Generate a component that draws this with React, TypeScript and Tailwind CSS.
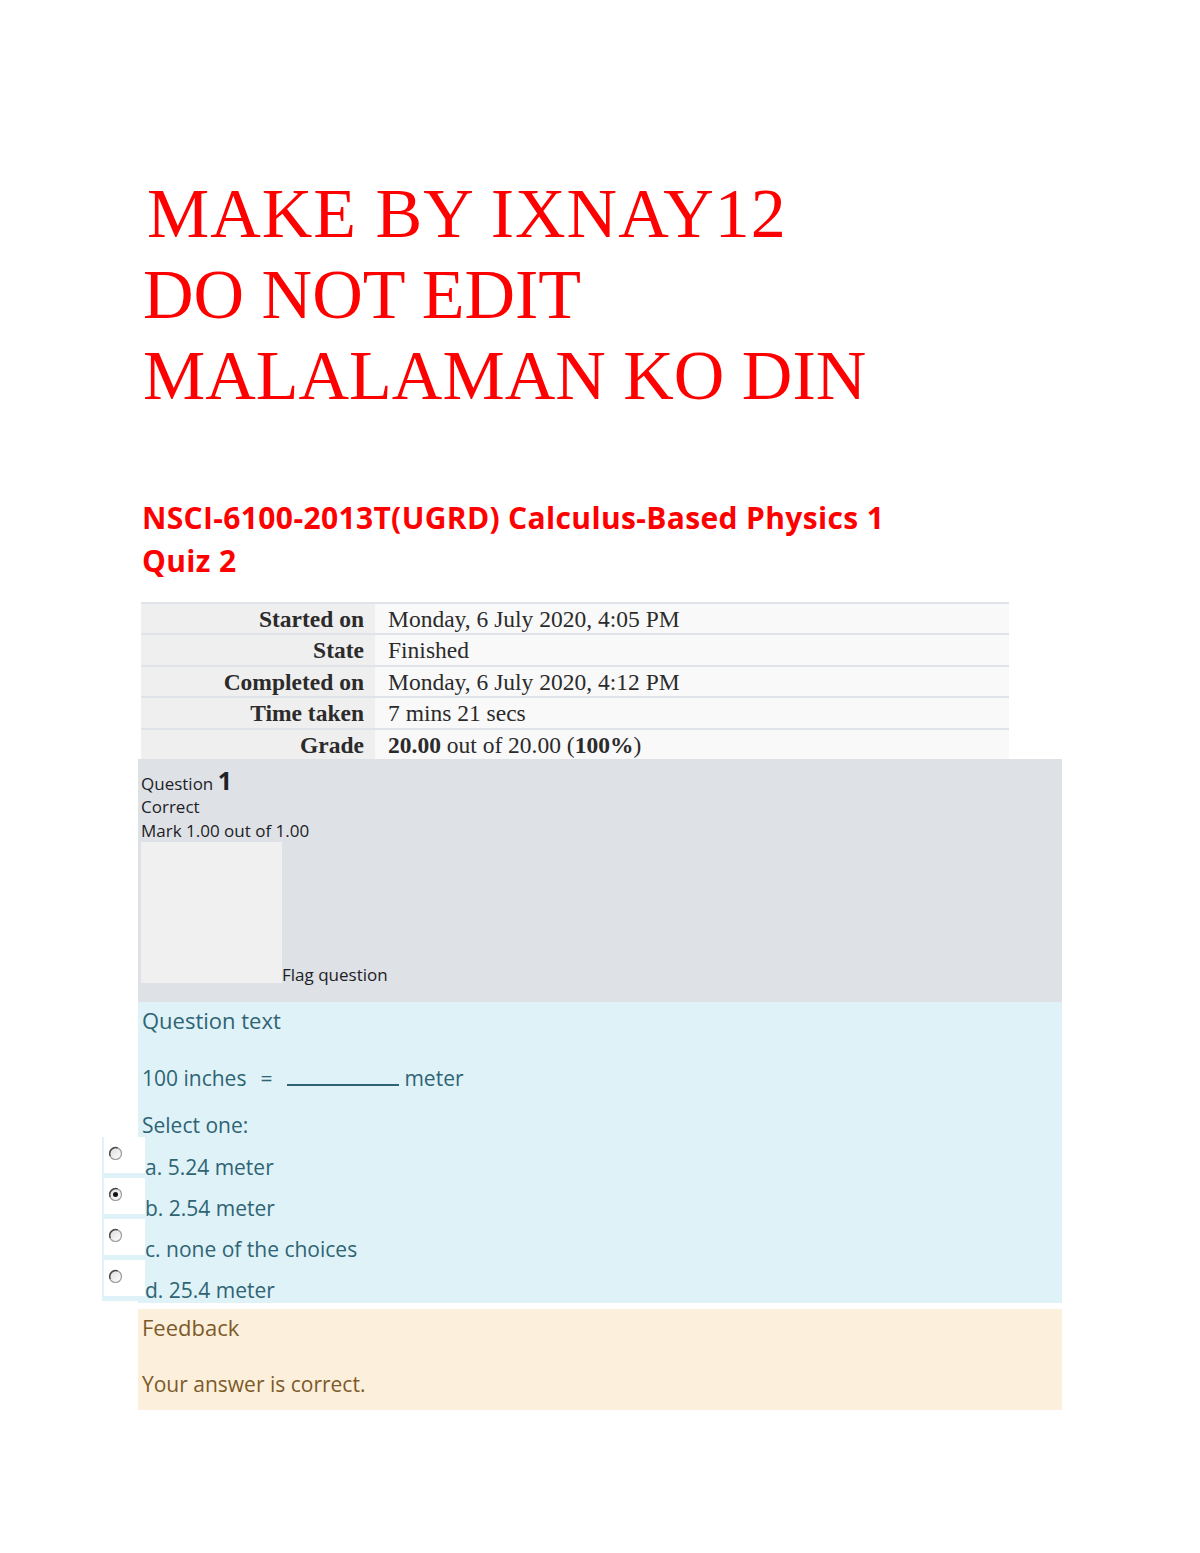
import React from "react";

const serif = { fontFamily: '"Liberation Serif", "Times New Roman", serif' };
const sans = { fontFamily: '"Open Sans", "Noto Sans", sans-serif' };

const summary: { label: string; value: React.ReactNode }[] = [
  { label: "Started on", value: "Monday, 6 July 2020, 4:05 PM" },
  { label: "State", value: "Finished" },
  { label: "Completed on", value: "Monday, 6 July 2020, 4:12 PM" },
  { label: "Time taken", value: "7 mins 21 secs" },
  {
    label: "Grade",
    value: (
      <>
        <b>20.00</b> out of 20.00 (<b>100%</b>)
      </>
    ),
  },
];

const answers = [
  { key: "a", text: "a. 5.24 meter", checked: false },
  { key: "b", text: "b. 2.54 meter", checked: true },
  { key: "c", text: "c. none of the choices", checked: false },
  { key: "d", text: "d. 25.4 meter", checked: false },
];

function Radio({ checked }: { checked: boolean }) {
  return (
    <svg width="15" height="15" viewBox="0 0 15 15" className="block">
      <defs>
        <linearGradient id="rg" x1="0" y1="0" x2="1" y2="1">
          <stop offset="0" stopColor="#dcdcdc" />
          <stop offset="1" stopColor="#ffffff" />
        </linearGradient>
      </defs>
      <circle cx="7.5" cy="7.5" r="6" fill="url(#rg)" stroke="#9a9a9a" strokeWidth="1.2" />
      <path d="M2.3 10 A6 6 0 0 1 9.8 1.9" fill="none" stroke="#4a4a4a" strokeWidth="1.4" />
      {checked && <circle cx="7.5" cy="7.5" r="2.5" fill="#111" />}
    </svg>
  );
}

export default function App() {
  return (
    <div className="min-h-[1553px] bg-white">
      <div className="w-[924px] ml-[138px] pt-[173px] pb-[140px]">
        <div className="text-[#ff0000] text-[70px] leading-[81px] ml-[5px]" style={serif}>
          <div className="ml-[4px] tracking-[1px]">MAKE BY IXNAY12</div>
          <div>DO NOT EDIT</div>
          <div>MALALAMAN KO DIN</div>
        </div>

        <h1
          className="mt-[80px] ml-[4px] text-[#ff0000] text-[30px] leading-[43px] font-bold tracking-[0.35px]"
          style={sans}
        >
          NSCI-6100-2013T(UGRD) Calculus-Based Physics 1
          <br />
          Quiz 2
        </h1>

        <div className="mt-[20px] ml-[3px] w-[868px] text-[23.5px] text-[#2b2b2b]" style={serif}>
          {summary.map((row) => (
            <div key={row.label} className="flex h-[31.4px] border-t-2 border-[#e0e3e7]">
              <div className="w-[234px] bg-[#efefef] pr-[11px] text-right font-bold leading-[31px]">
                {row.label}
              </div>
              <div className="flex-1 bg-[#f9f9f9] pl-[13px] leading-[31px]">{row.value}</div>
            </div>
          ))}
        </div>

        <div className="bg-[#dee2e6] pt-[8px] pb-[19px] pl-[3px] text-[#1d2125] text-[17px]" style={sans}>
          <div className="h-[27px] leading-[27px]">
            Question <span className="text-[25px] font-bold">1</span>
          </div>
          <div className="h-[25px] leading-[25px]">Correct</div>
          <div className="h-[23px] leading-[23px]">Mark 1.00 out of 1.00</div>
          <div className="flex items-end">
            <div className="w-[141px] h-[141px] bg-[#f0f0f0]" />
            <span className="leading-[20px] -mb-[2px] font-medium">Flag question</span>
          </div>
        </div>

        <div className="bg-[#def2f8] text-[#2f6473] pl-[4px] pb-[2px]" style={sans}>
          <h3 className="h-[36px] leading-[36px] text-[22px]">Question text</h3>
          <p className="mt-[22px] h-[36px] leading-[36px] text-[21px]">
            100 inches
            <span className="ml-[14px]">=</span>
            <span className="inline-block ml-[15px] w-[112px] border-b-2 border-[#2f6473]" />
            <span className="ml-[5px]">meter</span>
          </p>
          <p className="mt-[17px] h-[24px] leading-[24px] text-[21px]">Select one:</p>
          <div className="-ml-[40px] bg-[#def2f8] pl-[2px]">
            {answers.map((a) => (
              <div key={a.key} className="flex h-[41px]">
                <div className="w-[41px] h-[36px] bg-white pl-[4px] pt-[9px]">
                  <Radio checked={a.checked} />
                </div>
                <label className="pt-[19px] leading-[22px] text-[21px]">{a.text}</label>
              </div>
            ))}
          </div>
        </div>

        <div className="mt-[6px] bg-[#fcefdc] text-[#7d5a29] pl-[4px] pb-[8px]" style={sans}>
          <h3 className="h-[36px] leading-[36px] text-[22px]">Feedback</h3>
          <p className="mt-[21px] h-[36px] leading-[36px] text-[21px]">Your answer is correct.</p>
        </div>
      </div>
    </div>
  );
}
